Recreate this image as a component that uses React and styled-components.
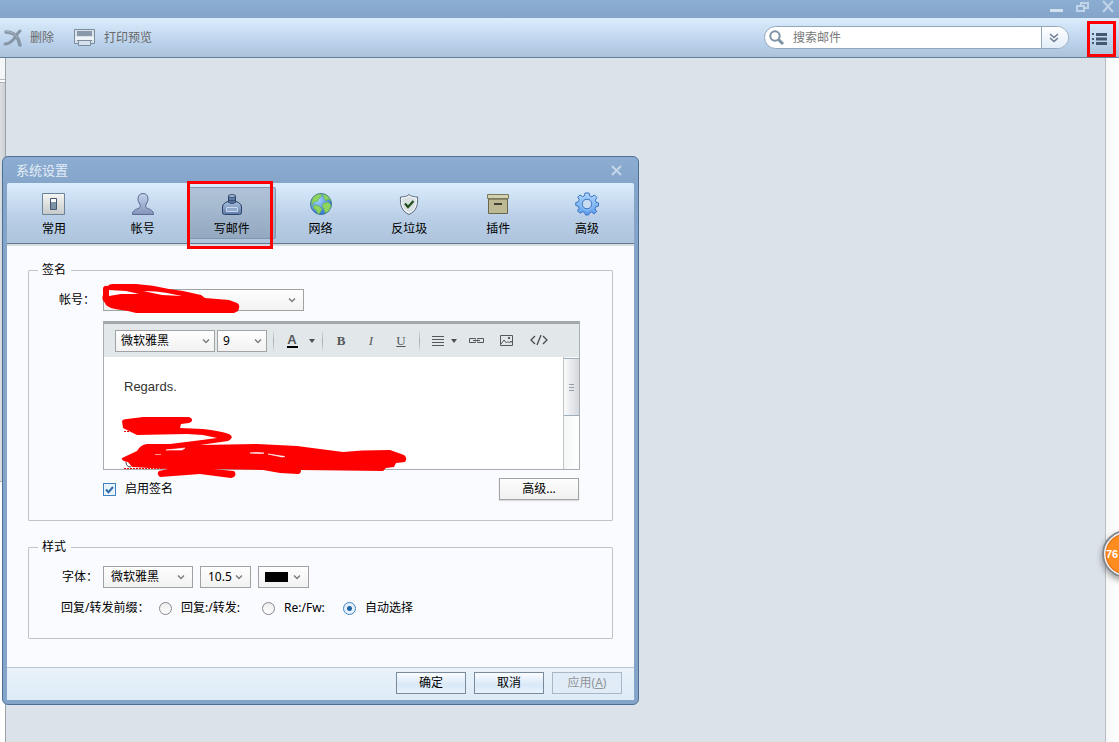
import { useState } from 'react';
import styled, { createGlobalStyle, css } from 'styled-components';

const GlobalStyle = createGlobalStyle`
  * {
    box-sizing: border-box;
  }
  body {
    margin: 0;
    overflow: hidden;
    font-family: "Noto Sans", "Noto Sans CJK SC", sans-serif;
    font-size: 12px;
    line-height: 18px;
    color: #000;
  }
  button, input, select, textarea {
    font: inherit;
    color: inherit;
    margin: 0;
  }
  svg {
    display: block;
    flex: none;
  }
`;

/* ---------- main window ---------- */

const Window = styled.div`
  position: relative;
  display: flex;
  flex-direction: column;
  min-height: 100vh;
  overflow: hidden;
  background: #dbe2e9;
`;

const WindowBar = styled.header`
  display: flex;
  justify-content: flex-end;
  align-items: flex-start;
  gap: 12px;
  height: 18px;
  padding-right: 4px;
  background: linear-gradient(#8caed3, #84a4ca);
`;

const WindowButton = styled.button`
  display: flex;
  padding: 0;
  border: 0;
  background: none;
`;

const Toolbar = styled.div`
  display: flex;
  align-items: center;
  height: 40px;
  padding: 0 3px 0 3px;
  background: linear-gradient(#dbedfd, #b8cfe9 70%, #abc2da);
  border-bottom: 1px solid #67809a;
`;

const ToolButton = styled.button`
  display: flex;
  align-items: center;
  gap: ${(props) => props.$gap}px;
  margin-right: 20px;
  padding: 0;
  border: 0;
  background: none;
  color: #686868;
`;

const Search = styled.div`
  display: flex;
  align-items: center;
  width: 305px;
  height: 23px;
  margin-left: auto;
  padding-left: 4px;
  border: 1px solid #93a8bb;
  border-radius: 12px;
  background: #fff;
  overflow: hidden;
`;

const SearchInput = styled.input`
  flex: 1;
  min-width: 0;
  padding: 0 0 0 9px;
  border: 0;
  outline: 0;
  background: none;
  &::placeholder {
    color: #777;
    opacity: 1;
  }
`;

const SearchMore = styled.button`
  display: flex;
  align-items: center;
  width: 27px;
  height: 100%;
  padding: 0 0 0 7px;
  border: 0;
  border-left: 1px solid #93a8bb;
  background: linear-gradient(#fff, #e3edf8);
`;

const MenuButton = styled.button`
  display: flex;
  align-items: center;
  align-self: flex-end;
  justify-content: center;
  width: 29px;
  height: 36px;
  margin-left: 18px;
  padding: 0 4px 0 0;
  border: 3px solid #f00;
  background: none;
`;

const Body = styled.main`
  display: flex;
  flex: 1;
`;

const LeftPane = styled.div`
  display: flex;
  flex-direction: column;
  width: 6px;
  background: #fff;
  border-right: 1px solid #9aa1a8;
`;

const LeftHead = styled.div`
  height: 22px;
  background: #f4f6f8;
  border-bottom: 1px solid #b4b9be;
`;

const LeftList = styled.div`
  height: 400px;
  margin-top: 2px;
  border-top: 1px solid #aab0b6;
  border-bottom: 1px solid #aab0b6;
  background: linear-gradient(90deg, #dcdfe2, #ccd0d4);
`;

const RightPane = styled.div`
  width: 14px;
  margin-left: auto;
  background: linear-gradient(90deg, #f5f8f7, #fff);
  border-left: 1px solid #b9bec2;
`;

const Badge = styled.div`
  position: absolute;
  top: 530px;
  right: -31px;
  width: 48px;
  height: 48px;
  padding-left: 2px;
  border: 2px solid #83878b;
  border-radius: 50%;
  background: radial-gradient(#ff8c1e 0 19px, #e46c08 20px, #f4f4f4 21px);
  box-shadow: 0 3px 6px rgba(0, 0, 0, 0.4);
  color: #fff;
  font: bold 11px/44px "Liberation Sans", sans-serif;
`;

/* ---------- settings dialog ---------- */

const Dialog = styled.section`
  position: absolute;
  top: 156px;
  left: 2px;
  width: 637px;
  padding: 0 4px 4px;
  border: 1px solid #4c7095;
  border-radius: 6px;
  background: linear-gradient(#8daed2, #84a4ca 27px);
`;

const DialogTitle = styled.div`
  display: flex;
  align-items: center;
  justify-content: space-between;
  height: 26px;
  padding: 0 12px 0 9px;
  color: #e3edf8;
  font-size: 13px;
`;

const Tabs = styled.nav`
  display: flex;
  gap: 1px;
  height: 61px;
  padding: 4px 3px;
  border-radius: 2px 2px 0 0;
  border-bottom: 1px solid #64798f;
  background: linear-gradient(#dbedfd, #b8cde6 60%, #aec4dc);
`;

const Tab = styled.button`
  position: relative;
  display: flex;
  flex: 1;
  flex-direction: column;
  align-items: center;
  gap: 4px;
  height: 52px;
  padding: 4px 0 0;
  border: 1px solid transparent;
  background: none;
  ${(props) =>
    props.$active &&
    css`
      border-color: #8097b0;
      border-radius: 2px;
      background: linear-gradient(#b0c3d9, #93a9c0);
    `}
`;

const Highlight = styled.span`
  position: absolute;
  top: -7px;
  left: -2px;
  width: 86px;
  height: 68px;
  border: 3px solid #f00;
`;

const Content = styled.div`
  padding: 15px 21px 28px;
  border-top: 2px solid #d5dbe1;
  background: #f9fbff;
`;

const Group = styled.fieldset`
  min-width: 0;
  margin: 0 0 17px;
  padding: ${(props) => props.$padding};
  border: 1px solid #c1c3c6;
  border-radius: 1px;
  &:last-child {
    margin-bottom: 0;
  }
`;

const Legend = styled.legend`
  margin-left: -21px;
  padding: 0 5px 0 4px;
`;

const Row = styled.div`
  display: flex;
  align-items: center;
  gap: 7px;
`;

const FieldLabel = styled.label`
  width: 37px;
  padding-left: ${(props) => props.$indent || 0}px;
  white-space: nowrap;
`;

const SelectBox = styled.div`
  position: relative;
  width: ${(props) => props.$width}px;
  height: 22px;
  > svg {
    position: absolute;
    top: 8px;
    right: ${(props) => props.$arrow || 8}px;
    pointer-events: none;
  }
`;

const SelectField = styled.select`
  appearance: none;
  display: block;
  width: 100%;
  height: 22px;
  padding: 0 0 0 ${(props) => props.$indent || 7}px;
  border: 1px solid #a0a2a4;
  border-radius: 0;
  background: linear-gradient(#fefefe, #f2f2f3);
  line-height: 18px;
`;

const Swatch = styled.span`
  position: absolute;
  top: 6px;
  left: 7px;
  width: 23px;
  height: 10px;
  background: #000;
  pointer-events: none;
`;

const Editor = styled.div`
  position: relative;
  margin: 10px 0 8px 44px;
  border: 1px solid #a9adaf;
  border-top: 3px solid #a3a8ab;
  background: #fff;
`;

const EditorBar = styled.div`
  display: flex;
  align-items: center;
  height: 33px;
  padding-left: 11px;
  background: #e2e7ea;
`;

const EditorSelects = styled.div`
  display: flex;
  gap: 2px;
`;

const Divider = styled.i`
  width: 1px;
  height: 20px;
  margin: 0 ${(props) => props.$after}px 0 ${(props) => props.$before}px;
  background: linear-gradient(#d8dde0, #a8adb0, #d8dde0);
`;

const EditButton = styled.button`
  display: flex;
  align-items: center;
  justify-content: center;
  width: ${(props) => props.$width || 30}px;
  height: 22px;
  padding: 0;
  border: 0;
  background: none;
  color: #55585a;
  font: ${(props) => props.$font || 'bold'} 13px/20px "Liberation Serif", serif;
  text-decoration: ${(props) => (props.$underline ? 'underline' : 'none')};
`;

const FontColor = styled.span`
  width: 11px;
  border-bottom: 2px solid #000;
  font: bold 13px/12px "Liberation Sans", sans-serif;
  text-align: center;
`;

const EditorArea = styled.div`
  display: flex;
  height: 112px;
`;

const EditorText = styled.textarea`
  flex: 1;
  padding: 21px 20px;
  border: 0;
  outline: 0;
  resize: none;
  overflow: hidden;
  background: #fff;
  color: #333;
  font: 13px/17px "Liberation Sans", sans-serif;
`;

const ScrollTrack = styled.div`
  width: 16px;
  padding-top: 1px;
  border-left: 1px solid #c2c4c4;
  background: linear-gradient(90deg, #f5f7f7, #fff);
`;

const ScrollThumb = styled.div`
  display: flex;
  align-items: center;
  justify-content: center;
  height: 58px;
  border: solid #9dafbd;
  border-width: 1px 0;
  background: linear-gradient(90deg, #fafbfc, #d3d7dd);
`;

const Scribble = styled.svg`
  position: absolute;
  top: ${(props) => props.$top}px;
  left: ${(props) => props.$left}px;
  overflow: visible;
  pointer-events: none;
`;

const AccountField = styled.div`
  position: relative;
`;

const SignatureFooter = styled.div`
  display: flex;
  align-items: center;
  justify-content: space-between;
  margin-left: 44px;
  padding-right: 1px;
`;

const Choice = styled.label`
  display: flex;
  align-items: center;
  gap: 9px;
`;

const Checkbox = styled.input`
  appearance: none;
  width: 13px;
  height: 13px;
  border: 1px solid #3e83bf;
  background: #e9f3fc;
  &:checked {
    background: #e9f3fc
      url("data:image/svg+xml,%3Csvg xmlns='http://www.w3.org/2000/svg' viewBox='0 0 11 11'%3E%3Cpath d='M2 5.5l2.5 2.7L9 3' fill='none' stroke='%232f6ca8' stroke-width='2'/%3E%3C/svg%3E");
  }
`;

const Radio = styled.input`
  appearance: none;
  width: 13px;
  height: 13px;
  border: 1px solid #85878a;
  border-radius: 50%;
  background: linear-gradient(#ececec, #fff);
  &:checked {
    border-color: #3e83bf;
    background: radial-gradient(#2265a3 0 2px, #e4f1fc 3px);
  }
`;

const PrefixRow = styled.div`
  display: flex;
  align-items: center;
  margin-top: 11px;
  padding-left: 2px;
`;

const PrefixLabel = styled.span`
  width: 98px;
`;

const PrefixChoice = styled(Choice)`
  width: ${(props) => props.$width}px;
  white-space: nowrap;
`;

const PlainButton = styled.button`
  width: 80px;
  height: 22px;
  padding: 0;
  border: 1px solid #a0a2a4;
  background: linear-gradient(#fdfdfd, #f1f1f2);
  box-shadow: 0 1px 1px #ddd;
  line-height: 18px;
`;

const DialogFooter = styled.footer`
  display: flex;
  justify-content: flex-end;
  gap: 8px;
  height: 33px;
  padding: 4px 12px;
  border-top: 1px solid #b9c5d1;
  background: linear-gradient(#e9f2fa, #deebf7);
`;

const ActionButton = styled.button`
  width: 70px;
  height: 22px;
  padding: 0;
  border: 1px solid #788a9c;
  background: linear-gradient(#fafcff, #d9e8f7 60%, #e8f2fc);
  line-height: 18px;
  &:disabled {
    border-color: #a9b8c7;
    background: #e1ecf6;
    color: #8e9499;
  }
`;

/* ---------- drawings ---------- */

const Chevron = () => (
  <svg width="8" height="7" viewBox="0 0 8 7">
    <path d="M1 1.5l3 3 3-3" fill="none" stroke="#7b7d80" strokeWidth="1.5" />
  </svg>
);

const Caret = () => (
  <svg width="6" height="4" viewBox="0 0 6 4">
    <path d="M0 0h6L3 4z" fill="#4d5052" />
  </svg>
);

const DeleteIcon = () => (
  <svg width="20" height="19" viewBox="0 0 20 19" fill="none" strokeLinecap="round">
    <path d="M3 4c6 0 10 3 12 7 1 2 1 4 2 6" stroke="#8796a5" strokeWidth="3.5" />
    <path d="M17 3c-3 2-4 6-7 9-2 2-5 4-8 4" stroke="#8796a5" strokeWidth="3" />
    <path d="M3 3.500c5 0 9 2 11 6" stroke="#a9b6c3" />
  </svg>
);

const PrinterIcon = () => (
  <svg width="22" height="18" viewBox="0 0 22 18">
    <path d="M.5.5h20v14h-20z" fill="#d9e2eb" stroke="#7b8c9d" />
    <path d="M3 2h15v5H3z" fill="#8999a9" />
    <path d="M1 8h19v3H1z" fill="#eef3f8" />
    <path d="M3 11.5h15" stroke="#7b8c9d" />
    <path d="M4.5 11.5h12v5h-12z" fill="#d5e1ed" stroke="#7b8c9d" />
  </svg>
);

const SearchIcon = () => (
  <svg width="15" height="15" viewBox="0 0 15 15" fill="none" stroke="#7d92a5">
    <circle cx="6" cy="6" r="4.7" strokeWidth="2" />
    <path d="M9.5 9.5L14 14" strokeWidth="3" />
  </svg>
);

const GeneralIcon = () => (
  <svg width="24" height="24" viewBox="0 0 24 24">
    <defs>
      <linearGradient id="general" x1="0" y1="0" x2="0" y2="1">
        <stop stopColor="#f6f6f3" />
        <stop offset="1" stopColor="#c5cac9" />
      </linearGradient>
    </defs>
    <path d="M.5 1.5h22v21H.5z" fill="url(#general)" stroke="#6c8398" />
    <path d="M8.5 6.5h6v11h-6z" fill="#7d94a6" stroke="#41586e" />
    <path d="M9 7h5v3H9z" fill="#fff" />
  </svg>
);

const AccountIcon = () => (
  <svg width="24" height="24" viewBox="0 0 24 24">
    <defs>
      <linearGradient id="account" x1="0" y1="0" x2="0" y2="1">
        <stop stopColor="#c4d2ec" />
        <stop offset="1" stopColor="#8294bb" />
      </linearGradient>
    </defs>
    <path
      d="M12 1.5C8.500 1.500 7 4 7 7c0 2.500 1 3.500 1.800 5 .8 1.600.7 3.500-.8 4.200C4.500 17.500 1.500 18.500 1.500 22.500h21c0-4-3-5-6.500-6.300-1.500-.7-1.600-2.600-.8-4.200C16 10.500 17 9.500 17 7c0-3-1.500-5.500-5-5.500z"
      fill="url(#account)"
      stroke="#5b6b92"
    />
  </svg>
);

const ComposeIcon = () => (
  <svg width="24" height="24" viewBox="0 0 24 24">
    <defs>
      <linearGradient id="ink" x1="0" y1="0" x2="0" y2="1">
        <stop stopColor="#a9bfdd" />
        <stop offset="1" stopColor="#5d7ca8" />
      </linearGradient>
    </defs>
    <path d="M8 9.500C5 10.500 2.500 12 2.500 15v5.500q0 2 2 2h15q2 0 2-2V15c0-3-2.500-4.500-5.500-5.500z" fill="url(#ink)" stroke="#2c4468" />
    <path d="M8.500 3.500v7q3.500 2 7 0v-7z" fill="#5f7ba6" stroke="#2c4468" />
    <ellipse cx="12" cy="4" rx="3.500" ry="1.500" fill="#a4b8d8" stroke="#3b5379" />
    <path d="M8.500 8q3.500 2 7 0" fill="none" stroke="#2c4468" />
    <path d="M6.500 15.500h11v4h-11z" fill="#8fa9cc" stroke="#c9d8eb" />
  </svg>
);

const NetworkIcon = () => (
  <svg width="24" height="24" viewBox="0 0 24 24">
    <defs>
      <radialGradient id="globe" cx=".35" cy=".3" r=".75">
        <stop stopColor="#a9d6ff" />
        <stop offset="1" stopColor="#276ed0" />
      </radialGradient>
    </defs>
    <circle cx="12" cy="12" r="10.5" fill="url(#globe)" stroke="#41749b" />
    <path d="M4 6c2-3 5-4 8-4l1 2-3 2-1 3-4 1-2 3c-1-2 0-5 1-7zM14 2c4 1 7 4 8 7l-3-2-2 2-2-3zM5 13l5 1 3 3-2 4-2 1-2-4-3-2zM15 11l4-1 3 3c0 4-3 7-6 8l-1-4-2-3z" fill="#8ed45f" stroke="#5ca845" strokeWidth=".5" />
  </svg>
);

const ShieldIcon = () => (
  <svg width="24" height="24" viewBox="0 0 24 24">
    <path d="M12 2.500C10 4.500 7 5 3.500 5 3 12 4 19 12 22.500 20 19 21 12 20.500 5 17 5 14 4.500 12 2.500z" fill="#d8e0e4" stroke="#59687c" />
    <path d="M12 4C10 5.500 8 6 4.700 6 4.400 12 5 18 12 21 19 18 19.600 12 19.300 6 16 6 14 5.500 12 4z" fill="none" stroke="#f9fbfc" />
    <path d="M8 11.500l3 3.500 5.500-6" fill="none" stroke="#214d18" strokeWidth="2.200" />
  </svg>
);

const PluginIcon = () => (
  <svg width="24" height="24" viewBox="0 0 24 24">
    <path d="M2.500 6.500h19v15h-19z" fill="#bdb995" stroke="#69674c" />
    <path d="M1.500 2.500h21v4h-21z" fill="#d2cfb2" stroke="#7c795a" />
    <path d="M3 7.500h18" stroke="#8c896b" />
    <path d="M8 11h8v2H8z" fill="#414136" />
  </svg>
);

const GearIcon = () => (
  <svg width="24" height="24" viewBox="0 0 24 24">
    <defs>
      <linearGradient id="gear" x1="0" y1="0" x2="0" y2="1">
        <stop stopColor="#b3daff" />
        <stop offset="1" stopColor="#5c9cee" />
      </linearGradient>
    </defs>
    <path
      d="M10 1h4l.8 3 2 .8L19.500 3 22 5.500l-1.700 2.700.8 2L23.500 11v3l-2.700.8-.8 2 1.700 2.700-2.500 2.300-2.700-1.700-2 .8L13.500 23h-3l-.8-2.500-2-.8L5 21.200 2.500 18.700 4 16.300l-.8-2L.8 13.500v-3L3.500 9.700l.8-2L2.700 5.200 5 3l2.500 1.600 2-.8z"
      fill="url(#gear)"
      stroke="#3a73bd"
    />
    <circle cx="12" cy="12" r="4.800" fill="#c7dcf1" stroke="#3a73bd" />
    <circle cx="12" cy="12" r="6.200" fill="none" stroke="#8fc1f8" />
  </svg>
);

const TABS = [
  { label: '常用', Icon: GeneralIcon },
  { label: '帐号', Icon: AccountIcon },
  { label: '写邮件', Icon: ComposeIcon },
  { label: '网络', Icon: NetworkIcon },
  { label: '反垃圾', Icon: ShieldIcon },
  { label: '插件', Icon: PluginIcon },
  { label: '高级', Icon: GearIcon },
];

/* ---------- parts ---------- */

function Select({ width, options, arrow, indent, children, ...rest }) {
  return (
    <SelectBox $width={width} $arrow={arrow}>
      <SelectField $indent={indent} {...rest}>
        {options.map((option) => (
          <option key={option}>{option}</option>
        ))}
      </SelectField>
      {children}
      <Chevron />
    </SelectBox>
  );
}

function MainWindow() {
  return (
    <>
      <WindowBar>
        <WindowButton aria-label="最小化">
          <svg width="14" height="13" viewBox="0 0 14 13">
            <path d="M0 9h13v3H0z" fill="#d3e1ef" />
          </svg>
        </WindowButton>
        <WindowButton aria-label="还原">
          <svg width="14" height="13" viewBox="0 0 14 13" fill="none" stroke="#c2d4e8" strokeWidth="2">
            <path d="M5 5V3h7v5H9M1 6h7v5H1z" />
          </svg>
        </WindowButton>
        <WindowButton aria-label="关闭">
          <svg width="13" height="13" viewBox="0 0 13 13" stroke="#c2d4e8" strokeWidth="2">
            <path d="M1 1l10 11M11 1L1 12" />
          </svg>
        </WindowButton>
      </WindowBar>
      <Toolbar>
        <ToolButton $gap={7}>
          <DeleteIcon />
          删除
        </ToolButton>
        <ToolButton $gap={8}>
          <PrinterIcon />
          打印预览
        </ToolButton>
        <Search>
          <SearchIcon />
          <SearchInput placeholder="搜索邮件" aria-label="搜索邮件" />
          <SearchMore aria-label="更多搜索选项">
            <svg width="10" height="10" viewBox="0 0 10 10" fill="none" stroke="#6b7d90" strokeWidth="1.5">
              <path d="M1 1l4 3.500L9 1M1 5l4 3.500L9 5" />
            </svg>
          </SearchMore>
        </Search>
        <MenuButton aria-label="菜单">
          <svg width="15" height="12" viewBox="0 0 15 12" fill="#43596f">
            <path d="M0 0h2v2H0zM4 0h11v3H4zM0 5h2v2H0zM4 4.500h11v3H4zM0 9h2v2H0zM4 9h11v3H4z" />
          </svg>
        </MenuButton>
      </Toolbar>
      <Body>
        <LeftPane>
          <LeftHead />
          <LeftList />
        </LeftPane>
        <RightPane />
      </Body>
      <Badge>76</Badge>
    </>
  );
}

function SignatureEditor() {
  return (
    <Editor>
      <EditorBar>
        <EditorSelects>
          <Select width={100} arrow={5} indent={5} options={['微软雅黑']} aria-label="签名字体" />
          <Select width={50} arrow={5} indent={5} options={['9']} aria-label="签名字号" />
        </EditorSelects>
        <Divider $before={6} $after={6} />
        <EditButton $width={24} aria-label="文字颜色">
          <FontColor>A</FontColor>
        </EditButton>
        <EditButton $width={15} aria-label="选择文字颜色">
          <Caret />
        </EditButton>
        <Divider $before={3} $after={3} />
        <EditButton>B</EditButton>
        <EditButton $font="italic">I</EditButton>
        <EditButton $font="normal" $underline>U</EditButton>
        <Divider $before={3} $after={8} />
        <EditButton $width={20} aria-label="对齐">
          <svg width="12" height="10" viewBox="0 0 12 10" stroke="#55585a">
            <path d="M0 .5h12M0 3.500h12M0 6.500h12M0 9.500h12" />
          </svg>
        </EditButton>
        <EditButton $width={11} aria-label="对齐方式">
          <Caret />
        </EditButton>
        <EditButton $width={34} aria-label="链接">
          <svg width="15" height="6" viewBox="0 0 15 6" fill="none" stroke="#55585a">
            <path d="M6.500 1.500v-1h-6v4h6v-1M8.500 1.500v-1h6v4h-6v-1M4 2.500h7" />
          </svg>
        </EditButton>
        <EditButton $width={27} aria-label="图片">
          <svg width="13" height="11" viewBox="0 0 13 11" fill="none" stroke="#55585a">
            <path d="M.5.5h12v10H.5zM1 9l3-4 2.500 3L8 6.500 9.500 8 11 6l1.500 2" />
            <path d="M8 2h2v2H8z" fill="#55585a" stroke="none" />
          </svg>
        </EditButton>
        <EditButton $width={37} aria-label="源代码">
          <svg width="18" height="12" viewBox="0 0 18 12" fill="none" stroke="#484b4d" strokeWidth="1.3">
            <path d="M5 1L1 5l4 4M11 0L7 10M13 1l4 4-4 4" />
          </svg>
        </EditButton>
      </EditorBar>
      <EditorArea>
        <EditorText defaultValue="Regards." aria-label="签名内容" />
        <ScrollTrack>
          <ScrollThumb>
            <svg width="5" height="7" viewBox="0 0 5 7" stroke="#969fa8">
              <path d="M0 .5h5M0 3.500h5M0 6.500h5" />
            </svg>
          </ScrollThumb>
        </ScrollTrack>
      </EditorArea>
      <Scribble $top={92} $left={18} width="290" height="64" viewBox="0 0 290 64">
        <path d="M4 46q0 5 5 5" fill="none" stroke="#444" />
        <path d="M2 15.500h5M2 52.500h40" fill="none" stroke="#e00" strokeDasharray="2 1" />
        <path
          d="M0 5Q1 3 5 3L21 1H67Q72 3 69 6L67 7 59 8 58 12 81 13Q98 15 107 18 113 21 106 25L78 29 135 28 175 30 221 36 240 34.500 268 34 282 39Q286 42 283 46L274 47 272 51 264 52 261 55 179 54Q179 58 176 58L158 57 141 54 91 53 112 55Q115 58 112 61L109 62 78 58 38 61Q34 58 37 55L46 53 10 51 6 46Q-1 45 0 42L15 35Q18 29 25 28L48 28 80 24 95 22 81 19 65 18 15 19 11 17 1 12z"
          fill="#f00"
        />
        <path d="M44 34l19-2-3 2zM33 38.500h6M128 37q7-1 14 0l-3 .5zM146 38l17 2.500-3 .5z" fill="#fff" stroke="#fff" strokeWidth=".6" />
      </Scribble>
    </Editor>
  );
}

function SettingsDialog() {
  const [active, setActive] = useState('写邮件');
  const [prefix, setPrefix] = useState('自动选择');

  return (
    <Dialog role="dialog" aria-label="系统设置">
      <DialogTitle>
        系统设置
        <WindowButton aria-label="关闭设置">
          <svg width="11" height="11" viewBox="0 0 11 11" stroke="#c5d7ea" strokeWidth="2">
            <path d="M1 1l9 9M10 1l-9 9" />
          </svg>
        </WindowButton>
      </DialogTitle>
      <Tabs>
        {TABS.map(({ label, Icon }) => (
          <Tab key={label} $active={label === active} onClick={() => setActive(label)}>
            <Icon />
            {label}
            {label === '写邮件' && <Highlight />}
          </Tab>
        ))}
      </Tabs>
      <Content>
        <Group $padding="10px 32px 20px 30px">
          <Legend>签名</Legend>
          <Row>
            <FieldLabel htmlFor="account">帐号：</FieldLabel>
            <AccountField>
              <Select id="account" width={201} options={['']} />
              <Scribble $top={-6} $left={-2} width="140" height="30" viewBox="0 0 140 30">
                <path
                  d="M2 5Q3 2 7 3 8 1 12 1L35 1Q52 2 68 6L82 8 100 12 104 15 128 17 136 20Q140 22 137 28L133 30H35L27 28 14 26Q5 24 4 20 0 16 2 12z"
                  fill="#f00"
                />
                <path d="M8 7l17 1 13 3-18 0-12 2zM42 8q14 0 24 2l15 3-20-1z" fill="#fff" />
              </Scribble>
            </AccountField>
          </Row>
          <SignatureEditor />
          <SignatureFooter>
            <Choice>
              <Checkbox type="checkbox" defaultChecked />
              启用签名
            </Choice>
            <PlainButton>高级...</PlainButton>
          </SignatureFooter>
        </Group>
        <Group $padding="10px 30px 21px 30px">
          <Legend>样式</Legend>
          <Row>
            <FieldLabel htmlFor="font" $indent={3}>字体：</FieldLabel>
            <Select id="font" width={90} options={['微软雅黑']} />
            <Select width={51} options={['10.5']} aria-label="字号" />
            <Select width={51} options={['']} aria-label="颜色">
              <Swatch />
            </Select>
          </Row>
          <PrefixRow role="radiogroup" aria-labelledby="prefix-label">
            <PrefixLabel id="prefix-label">回复/转发前缀：</PrefixLabel>
            {[
              { label: '回复:/转发:', width: 103 },
              { label: 'Re:/Fw:', width: 81 },
              { label: '自动选择', width: 80 },
            ].map(({ label, width }) => (
              <PrefixChoice key={label} $width={width}>
                <Radio type="radio" name="prefix" checked={prefix === label} onChange={() => setPrefix(label)} />
                {label}
              </PrefixChoice>
            ))}
          </PrefixRow>
        </Group>
      </Content>
      <DialogFooter>
        <ActionButton>确定</ActionButton>
        <ActionButton>取消</ActionButton>
        <ActionButton disabled>
          应用(<u>A</u>)
        </ActionButton>
      </DialogFooter>
    </Dialog>
  );
}

export default function App() {
  return (
    <Window>
      <GlobalStyle />
      <MainWindow />
      <SettingsDialog />
    </Window>
  );
}
